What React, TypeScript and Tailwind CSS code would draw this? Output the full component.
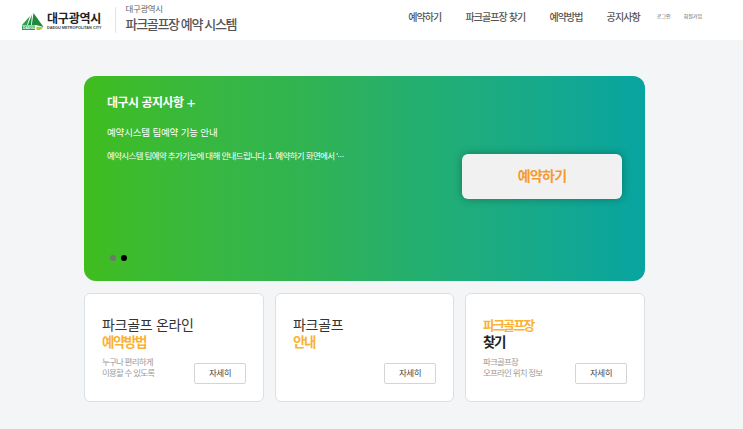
import React from 'react';

const font = "font-['Liberation_Sans','Noto_Sans_CJK_KR',sans-serif]";

const navItems = ['예약하기', '파크골프장 찾기', '예약방법', '공지사항'];

const Logo = () => (
  <svg width="22" height="17" viewBox="0 0 22 17" className="shrink-0">
    <path d="M0 12 L8 3 L5 12 Z" fill="#2f9e44" />
    <path d="M5.8 12 L10 1.5 L9 12 Z" fill="#1e8f3c" />
    <path d="M9.8 12 L11.5 0 L21.5 14 L14 12 Z" fill="#1c8a3a" />
    <path d="M0 12.5 H13 V17 H0 Z" fill="#2f9e44" />
    <path d="M14.5 13.5 L21.5 14.5 L18 17 L14.5 17 Z" fill="#a8c63c" />
    <text x="1" y="16" fontSize="3.4" fontWeight="700" fill="#fff">DAEGU</text>
  </svg>
);

type CardProps = {
  top: string;
  bottom: string;
  topClass: string;
  bottomClass: string;
  lines: string[];
};

const Card = ({ top, bottom, topClass, bottomClass, lines }: CardProps) => (
  <div className="relative h-[109px] rounded-md border border-[#dcdfe3] bg-white pl-[17px] pt-[23px]">
    <p className={`leading-[17px] ${topClass}`}>{top}</p>
    <p className={`leading-[17px] ${bottomClass}`}>{bottom}</p>
    <div className="mt-[6px] text-[8.5px] leading-[11px] tracking-[-0.8px] text-[#9a9a9a]">
      {lines.map((line) => (
        <p key={line}>{line}</p>
      ))}
    </div>
    <button className="absolute bottom-[17px] right-[17px] flex h-[21px] w-[52px] items-center justify-center rounded-[2px] border border-[#d5d5d5] bg-white text-[8.5px] tracking-[-0.5px] text-[#444]">
      자세히
    </button>
  </div>
);

export default function App() {
  return (
    <div className={`${font} h-[429px] w-[743px] overflow-hidden bg-[#f3f5f7]`}>
      {/* Header */}
      <header className="flex h-[40px] items-center bg-white pl-[22px]">
        <div className="flex items-center gap-[3px] pt-[3px]">
          <Logo />
          <div className="flex flex-col">
            <span className="text-[12px] font-bold leading-[13px] tracking-[-0.2px] text-[#222]">대구광역시</span>
            <span className="text-[3.8px] font-bold leading-[5px] text-[#444]">DAEGU METROPOLITAN CITY</span>
          </div>
        </div>
        <div className="ml-[13px] h-[26px] w-px bg-[#e4e4e4]" />
        <div className="mb-[2px] ml-[10px] flex flex-col">
          <span className="text-[8.5px] leading-[11px] tracking-[-0.4px] text-[#666]">대구광역시</span>
          <span className="mt-[1px] text-[13px] font-medium leading-[18px] tracking-[-1.35px] text-[#555]">파크골프장 예약 시스템</span>
        </div>
        <nav className="mb-[6px] ml-auto flex items-center pr-[41px]">
          <div className="flex gap-[24px]">
            {navItems.map((item) => (
              <a key={item} className="text-[10px] font-medium tracking-[-0.9px] text-[#555]">
                {item}
              </a>
            ))}
          </div>
          <a className="ml-[17px] text-[5px] text-[#555]">로그인</a>
          <a className="ml-[13px] text-[5px] text-[#555]">회원가입</a>
        </nav>
      </header>

      <main className="px-[84px] pr-[98px] pt-[36px]">
        {/* Notice banner */}
        <section className="relative h-[205px] rounded-[12px] bg-gradient-to-r from-[#40bd1c] via-[#30b352] via-40% to-[#07a4a0] pl-[23px] pt-[19px] text-white">
          <h2 className="flex items-center text-[12px] font-bold leading-[16px] tracking-[-0.5px]">
            대구시 공지사항<span className="ml-[3px] text-[15px] font-normal leading-[14px]">+</span>
          </h2>
          <p className="mt-[15px] text-[9.5px] leading-[13px] tracking-[-0.15px]">예약시스템 팀예약 기능 안내</p>
          <p className="mt-[11px] text-[8.5px] leading-[12px] tracking-[-0.65px]">
            예약시스템 팀예약 추가기능에 대해 안내드립니다. 1. 예약하기 화면에서 '···
          </p>
          <div className="mt-[93px] flex items-center gap-[5px] pl-[3px]">
            <span className="h-[6px] w-[6px] rounded-full bg-[#6b7a6b]" />
            <span className="h-[6px] w-[6px] rounded-full bg-black" />
          </div>
          <button className="absolute left-[378px] top-[78px] flex h-[45px] w-[160px] items-center justify-center rounded-[6px] bg-[#f1f1f1] text-[14px] font-bold tracking-[-0.7px] text-[#f59a2f] shadow-[0_0_8px_rgba(0,0,0,0.3)]">
            예약하기
          </button>
        </section>

        {/* Cards */}
        <section className="mt-[12px] grid grid-cols-[180px_179px_180px] gap-[11px]">
          <Card
            top="파크골프 온라인"
            bottom="예약방법"
            topClass="text-[14px] tracking-[-0.3px] text-[#333]"
            bottomClass="text-[13.5px] font-bold tracking-[-1.4px] text-[#f9b233]"
            lines={['누구나 편리하게', '이용할 수 있도록']}
          />
          <Card
            top="파크골프"
            bottom="안내"
            topClass="text-[14px] tracking-[-0.3px] text-[#333]"
            bottomClass="text-[13.5px] font-bold tracking-[-1.4px] text-[#f9b233]"
            lines={[]}
          />
          <Card
            top="파크골프장"
            bottom="찾기"
            topClass="text-[13px] font-bold tracking-[-1.9px] text-[#f9b233]"
            bottomClass="text-[13.5px] font-bold tracking-[-1.4px] text-[#222]"
            lines={['파크골프장', '오프라인 위치 정보']}
          />
        </section>
      </main>
    </div>
  );
}
